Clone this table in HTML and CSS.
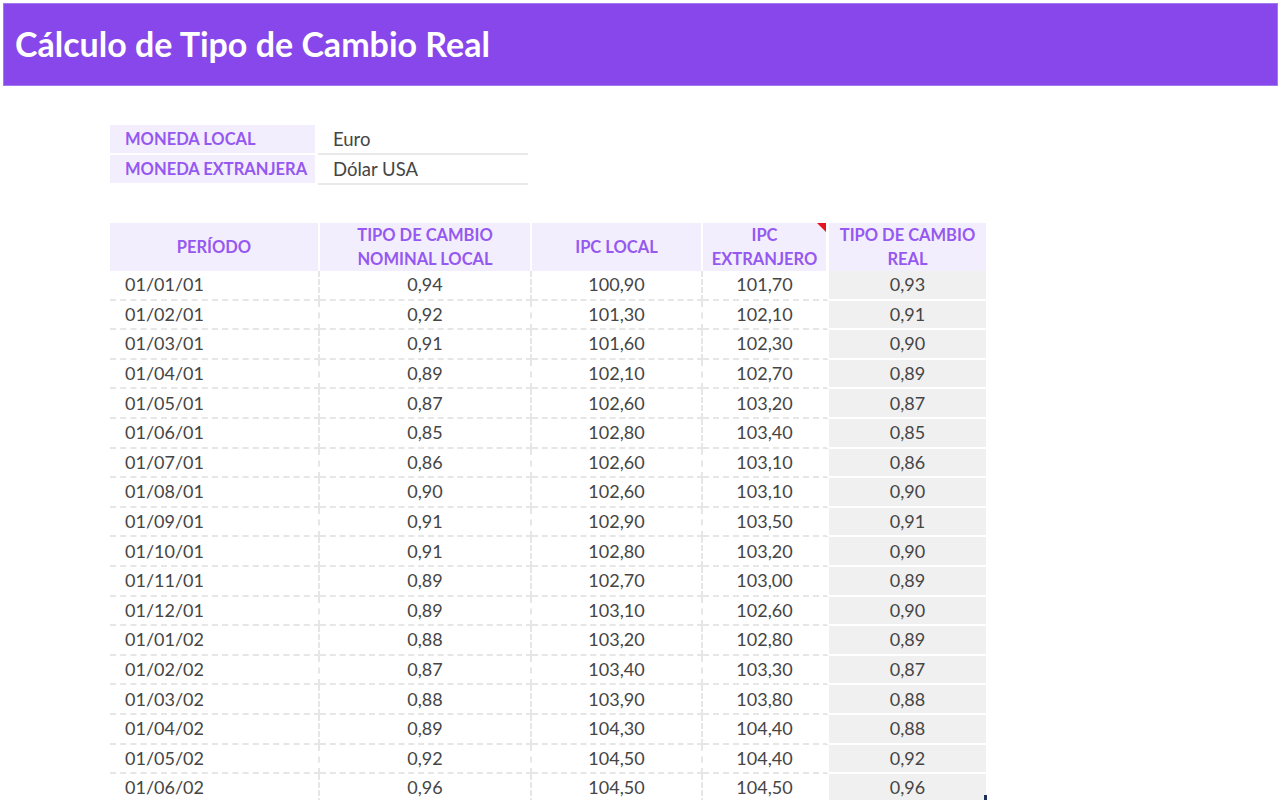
FILE: index.html
```html
<!DOCTYPE html>
<html lang="es">
<head>
<meta charset="utf-8">
<title>Cálculo de Tipo de Cambio Real</title>
<link rel="stylesheet" href="styles.css">
</head>
<body>
<div class="page">
  <header class="banner"><h1>Cálculo de Tipo de Cambio Real</h1></header>

  <table class="params">
    <tr><th>MONEDA LOCAL</th><td>Euro</td></tr>
    <tr><th>MONEDA EXTRANJERA</th><td>Dólar USA</td></tr>
  </table>

  <div class="data-wrap">
    <table class="data">
      <thead>
        <tr>
          <th>PERÍODO</th>
          <th>TIPO DE CAMBIO<br>NOMINAL LOCAL</th>
          <th>IPC LOCAL</th>
          <th class="commented">IPC<br>EXTRANJERO</th>
          <th>TIPO DE CAMBIO<br>REAL</th>
        </tr>
      </thead>
      <tbody>
        <tr><td>01/01/01</td><td>0,94</td><td>100,90</td><td>101,70</td><td>0,93</td></tr>
        <tr><td>01/02/01</td><td>0,92</td><td>101,30</td><td>102,10</td><td>0,91</td></tr>
        <tr><td>01/03/01</td><td>0,91</td><td>101,60</td><td>102,30</td><td>0,90</td></tr>
        <tr><td>01/04/01</td><td>0,89</td><td>102,10</td><td>102,70</td><td>0,89</td></tr>
        <tr><td>01/05/01</td><td>0,87</td><td>102,60</td><td>103,20</td><td>0,87</td></tr>
        <tr><td>01/06/01</td><td>0,85</td><td>102,80</td><td>103,40</td><td>0,85</td></tr>
        <tr><td>01/07/01</td><td>0,86</td><td>102,60</td><td>103,10</td><td>0,86</td></tr>
        <tr><td>01/08/01</td><td>0,90</td><td>102,60</td><td>103,10</td><td>0,90</td></tr>
        <tr><td>01/09/01</td><td>0,91</td><td>102,90</td><td>103,50</td><td>0,91</td></tr>
        <tr><td>01/10/01</td><td>0,91</td><td>102,80</td><td>103,20</td><td>0,90</td></tr>
        <tr><td>01/11/01</td><td>0,89</td><td>102,70</td><td>103,00</td><td>0,89</td></tr>
        <tr><td>01/12/01</td><td>0,89</td><td>103,10</td><td>102,60</td><td>0,90</td></tr>
        <tr><td>01/01/02</td><td>0,88</td><td>103,20</td><td>102,80</td><td>0,89</td></tr>
        <tr><td>01/02/02</td><td>0,87</td><td>103,40</td><td>103,30</td><td>0,87</td></tr>
        <tr><td>01/03/02</td><td>0,88</td><td>103,90</td><td>103,80</td><td>0,88</td></tr>
        <tr><td>01/04/02</td><td>0,89</td><td>104,30</td><td>104,40</td><td>0,88</td></tr>
        <tr><td>01/05/02</td><td>0,92</td><td>104,50</td><td>104,40</td><td>0,92</td></tr>
        <tr><td>01/06/02</td><td>0,96</td><td>104,50</td><td>104,50</td><td>0,96</td></tr>
      </tbody>
    </table>
    <span class="marker"></span>
  </div>
</div>
</body>
</html>
```

FILE: styles.css
```css
html, body {
  margin: 0;
  padding: 0;
  background: #ffffff;
}

body {
  font-family: Lato, "Open Sans", sans-serif;
  color: #454545;
  overflow: hidden;
  height: 800px;
}

.page {
  padding: 3px 2px 0 3px;
}

.banner {
  background: #8847ea;
  height: 83px;
  display: flex;
  align-items: center;
  padding-left: 12px;
  box-shadow: inset 0 0 0 1px #a27af0;
}

.banner h1 {
  margin: 0;
  color: #ffffff;
  font-size: 34px;
  font-weight: 700;
  letter-spacing: 0;
  padding-bottom: 2px;
}

.params {
  border-collapse: separate;
  border-spacing: 0;
  margin: 39px 0 0 107px;
}

.params th {
  background: #f3eefd;
  color: #9558f0;
  font-weight: 700;
  font-size: 16.5px;
  text-align: left;
  width: 190px;
  height: 28px;
  padding: 0 0 0 15px;
  border-bottom: 2px solid #ffffff;
  border-right: 3px solid #ffffff;
  white-space: nowrap;
}

.params td {
  width: 195px;
  height: 28px;
  padding: 0 0 0 15px;
  font-size: 18.5px;
  border-bottom: 2px solid #e9e9e9;
}

.data-wrap {
  position: relative;
  margin: 38px 0 0 107px;
}

.data {
  border-collapse: separate;
  border-spacing: 0;
}

.data th {
  background: #f3eefd;
  color: #9558f0;
  font-weight: 700;
  font-size: 16.5px;
  line-height: 24px;
  height: 48px;
  padding: 0;
  text-align: center;
  border-right: 2px solid #ffffff;
}

.data th:nth-child(1) { width: 208px; }
.data th:nth-child(2) { width: 210px; }
.data th:nth-child(3) { width: 169px; }
.data th:nth-child(4) { width: 123px; border-right-width: 3px; }
.data th:nth-child(5) { width: 157px; border-right: 0; }

.data th.commented {
  position: relative;
}

.data th.commented::after {
  content: "";
  position: absolute;
  top: 0;
  right: 0;
  width: 0;
  height: 0;
  border-top: 9px solid #e8141b;
  border-left: 9px solid transparent;
}

.data td {
  height: 27.6px;
  padding: 0;
  font-size: 18px;
  text-align: center;
  border-right: 2px dashed #e6e6e6;
  border-bottom: 2px dashed #e6e6e6;
  line-height: 27px;
}

.data td:first-child {
  text-align: left;
  padding-left: 15px;
}

.data td:nth-child(4) {
  border-right: 3px solid #ffffff;
}

.data td:nth-child(5) {
  background: #f0f0f0;
  border-right: 0;
  border-bottom: 2px solid #ffffff;
}

.marker {
  position: absolute;
  left: 874px;
  top: 572px;
  width: 3px;
  height: 6px;
  background: #1f2f5a;
}
```
